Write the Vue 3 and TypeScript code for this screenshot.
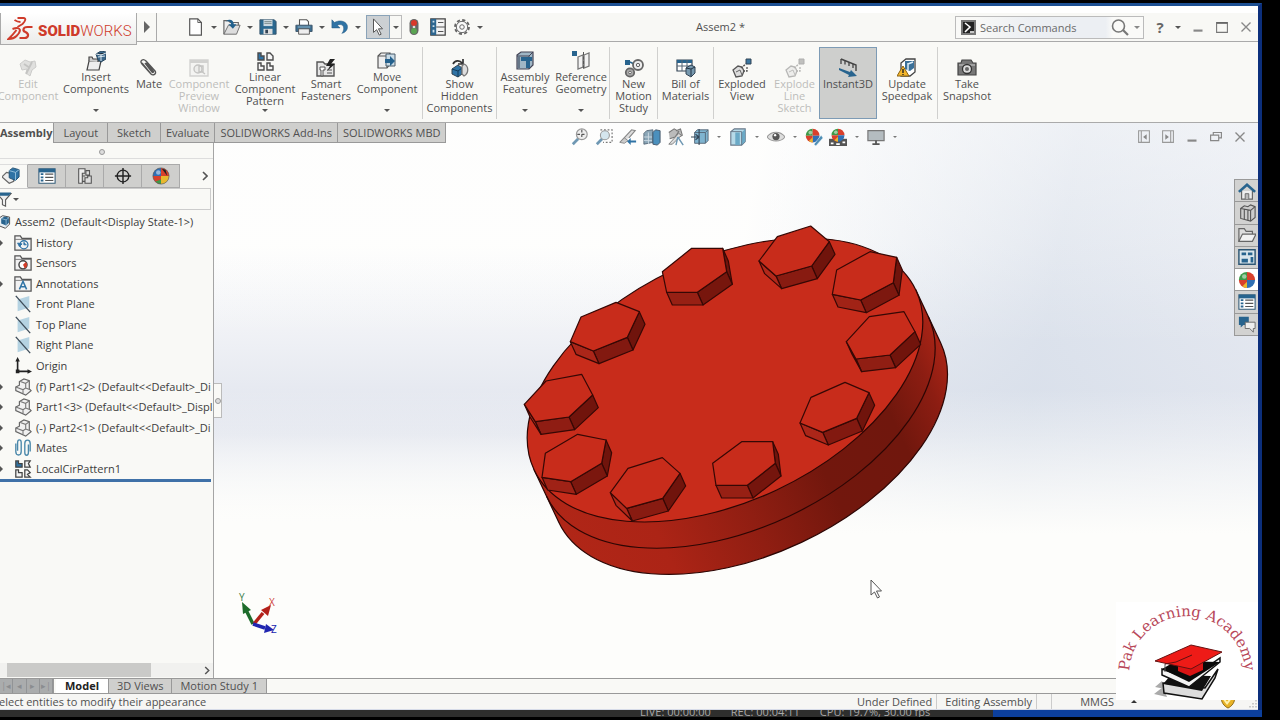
<script setup lang="ts">
type Pt = [number, number]

interface Tool { icon: string; lines: string[]; width: number; menu?: boolean; off?: boolean; active?: boolean }
interface TreeRow { icon: string; text: string; branch?: boolean }

const quick = [
  { icon: 'new', label: 'New' },
  { icon: 'open', label: 'Open' },
  { icon: 'save', label: 'Save' },
  { icon: 'print', label: 'Print' },
  { icon: 'undo', label: 'Undo' },
]

const groups: Tool[][] = [
  [
    { icon: 'edit', lines: ['Edit', 'Component'], width: 56, off: true },
    { icon: 'insert', lines: ['Insert', 'Components'], width: 80, menu: true },
    { icon: 'clip', lines: ['Mate'], width: 26 },
    { icon: 'preview', lines: ['Component', 'Preview', 'Window'], width: 74, off: true },
    { icon: 'linear', lines: ['Linear', 'Component', 'Pattern'], width: 58, menu: true },
    { icon: 'smart', lines: ['Smart', 'Fasteners'], width: 64 },
    { icon: 'move', lines: ['Move', 'Component'], width: 58, menu: true },
  ],
  [{ icon: 'show', lines: ['Show', 'Hidden', 'Components'], width: 73 }],
  [
    { icon: 'feature', lines: ['Assembly', 'Features'], width: 56, menu: true },
    { icon: 'geometry', lines: ['Reference', 'Geometry'], width: 56, menu: true },
  ],
  [{ icon: 'motion', lines: ['New', 'Motion', 'Study'], width: 47 }],
  [{ icon: 'bom', lines: ['Bill of', 'Materials'], width: 55 }],
  [
    { icon: 'explode', lines: ['Exploded', 'View'], width: 56 },
    { icon: 'explode', lines: ['Explode', 'Line', 'Sketch'], width: 49, off: true },
    { icon: 'instant', lines: ['Instant3D'], width: 58, active: true },
    { icon: 'update', lines: ['Update', 'Speedpak'], width: 60 },
  ],
  [{ icon: 'camera', lines: ['Take', 'Snapshot'], width: 58 }],
]

const commandTabs = ['Assembly', 'Layout', 'Sketch', 'Evaluate', 'SOLIDWORKS Add-Ins', 'SOLIDWORKS MBD']
const panelTabs = [
  { icon: 'asmtab', label: 'Feature tree' },
  { icon: 'list', label: 'Properties' },
  { icon: 'config', label: 'Configurations' },
  { icon: 'target', label: 'Dimensions' },
  { icon: 'ball', label: 'Display' },
]

const tree: TreeRow[] = [
  { icon: 'fhistory', text: 'History', branch: true },
  { icon: 'fsensor', text: 'Sensors' },
  { icon: 'fnote', text: 'Annotations', branch: true },
  { icon: 'plane', text: 'Front Plane' },
  { icon: 'plane', text: 'Top Plane' },
  { icon: 'plane', text: 'Right Plane' },
  { icon: 'origin', text: 'Origin' },
  { icon: 'part', text: '(f) Part1<2> (Default<<Default>_Di', branch: true },
  { icon: 'part', text: 'Part1<3> (Default<<Default>_Displ', branch: true },
  { icon: 'part', text: '(-) Part2<1> (Default<<Default>_Di', branch: true },
  { icon: 'mates', text: 'Mates', branch: true },
  { icon: 'pattern', text: 'LocalCirPattern1', branch: true },
]

const viewTools = [
  { icon: 'zoomfit' }, { icon: 'zoomarea' }, { icon: 'prev' }, { icon: 'section' }, { icon: 'dynamic' },
  { icon: 'orient', menu: true }, { icon: 'cube', menu: true }, { icon: 'eye', menu: true },
  { icon: 'appear' }, { icon: 'scene', menu: true }, { icon: 'monitor', menu: true },
]
const docTools = ['dockl', 'dockr', 'min', 'restore', 'close']
const taskTabs = ['home', 'library', 'folder', 'palette', 'tball', 'list', 'chat']

const bottomTabs = ['Model', '3D Views', 'Motion Study 1']

// Bolt heads, in thirds of a pixel from the corner of the part
const depth: Pt = [17, 38]
const heads: Pt[][] = [
  [[545, 100], [638, 100], [650, 170], [562, 232], [470, 232], [457, 170]],
  [[318, 262], [388, 290], [352, 367], [250, 408], [181, 380], [213, 306]],
  [[215, 478], [248, 540], [177, 606], [76, 620], [43, 568], [108, 498]],
  [[203, 658], [288, 675], [275, 745], [182, 800], [96, 787], [106, 715]],
  [[457, 728], [510, 775], [458, 850], [350, 880], [301, 833], [354, 760]],
  [[695, 680], [788, 680], [796, 745], [712, 811], [618, 811], [608, 745]],
  [[902, 33], [958, 80], [905, 153], [798, 183], [747, 138], [802, 65]],
  [[1080, 110], [1160, 127], [1150, 203], [1052, 255], [967, 238], [980, 165]],
  [[1182, 290], [1215, 350], [1140, 420], [1038, 432], [1009, 380], [1078, 305]],
  [[1005, 502], [1077, 533], [1040, 610], [938, 652], [870, 624], [903, 547]],
]

const pts = (p: Pt[]) => p.map((q) => q.join(',')).join(' ')

const bolts = heads.map((top) => {
  const sides: { points: string; fill: string }[] = []
  top.forEach((a, i) => {
    const b = top[(i + 1) % top.length]
    const nx = b[1] - a[1]
    const ny = a[0] - b[0]
    if (nx * depth[0] + ny * depth[1] <= 0) return
    const k = nx / Math.hypot(nx, ny)
    const t = Math.min(1, Math.max(0, (k + 0.5) / 1.2))
    const mix = (u: number, v: number) => Math.round(u + (v - u) * t)
    sides.push({
      points: pts([a, b, [b[0] + depth[0], b[1] + depth[1]], [a[0] + depth[0], a[1] + depth[1]]]),
      fill: `rgb(${mix(178, 112)},${mix(40, 20)},${mix(26, 12)})`,
    })
  })
  return { top: pts(top), sides }
})
</script>

<template>
  <div class="desktop">
    <svg class="defs" aria-hidden="true">
      <defs>
        <linearGradient id="rim" x1="0" x2="1" y1="0" y2="0">
          <stop offset="0" stop-color="#b02617" />
          <stop offset=".2" stop-color="#ac2416" />
          <stop offset=".42" stop-color="#901e12" />
          <stop offset=".62" stop-color="#72170d" />
          <stop offset=".82" stop-color="#70170d" />
          <stop offset=".93" stop-color="#8c1d12" />
          <stop offset="1" stop-color="#a82416" />
        </linearGradient>
      </defs>
      <symbol id="new" viewBox="0 0 20 20"><path d="M3 1h9l4 4v14H3z" fill="#fff" stroke="#555" stroke-width="1.300" /><path d="M12 1v4h4" fill="none" stroke="#555" /></symbol>
      <symbol id="open" viewBox="0 0 20 20"><path d="M1 18V3h5l2 2h9v4" fill="#eee" stroke="#666" stroke-width="1.300" /><path d="M1 18l5-10h13l-4 10z" fill="#ddd" stroke="#666" /><path d="M3 4c4-4 9-2 9 3h3l-4 5-5-5h3c0-3-3-4-6-3z" fill="#22618d" /></symbol>
      <symbol id="save" viewBox="0 0 20 20"><path d="M1 2h16l2 2v14H1z" fill="#2a6890" stroke="#34536a" /><path d="M5 2h10v7H5z" fill="#cbd8e0" /><path d="M6 4h8M6 6h8" stroke="#788" /><path d="M5 12h10v6H5z" fill="#ddd" /><path d="M7 13h3v4H7z" fill="#345" /></symbol>
      <symbol id="print" viewBox="0 0 20 20"><path d="M5 8V2h8l2 2v4" fill="#fff" stroke="#555" stroke-width="1.200" /><path d="M1 8h18v7H1z" fill="#3b6d90" stroke="#3d5568" /><path d="M4 12h12v6H4z" fill="#eee" stroke="#555" /><path d="M3 10h14" stroke="#9bbdd2" /></symbol>
      <symbol id="undo" viewBox="0 0 20 20"><path d="M1 2v9h9l-3-3c4-2 8 0 7 5-.4 2-1 3-2 4 5-1 7-5 6-9C16 3 9 2 4 5z" fill="#2f73a5" stroke="#245a82" stroke-width=".6" /></symbol>
      <symbol id="cursor" viewBox="0 0 20 20"><path d="M5 1v15l3.500-3 3 6 2-1-3-6H15z" fill="#fff" stroke="#555" stroke-width="1.100" /></symbol>
      <symbol id="light" viewBox="0 0 20 20"><rect x="5" y="1" width="10" height="18" rx="5" fill="#666" /><circle cx="10" cy="5.500" r="3.300" fill="#d9382a" /><circle cx="10" cy="10" r="1.500" fill="#ddd" /><circle cx="10" cy="14.500" r="3.300" fill="#5aa552" /></symbol>
      <symbol id="options" viewBox="0 0 20 20"><path d="M2 1h16v18H2z" fill="#f4f4f4" stroke="#444" stroke-width="1.400" /><path d="M2 1h6v18H2z" fill="#2d668f" /><path d="M4 3h2v2H4zM4 8h2v2H4zM4 13h2v3H4z" fill="#cfe0eb" /><path d="M10 5h6M10 15h6M8 10h10" stroke="#555" stroke-width="1.300" /></symbol>
      <symbol id="gear" viewBox="0 0 20 20"><circle cx="10" cy="10" r="7.800" fill="none" stroke="#666" stroke-width="2" stroke-dasharray="3.600 2.520" /><circle cx="10" cy="10" r="6.300" fill="#fafafa" stroke="#666" stroke-width="1.100" /><circle cx="10" cy="10" r="2.500" fill="none" stroke="#666" stroke-width="1.100" /></symbol>
      <symbol id="ds" viewBox="0 0 26 26"><path d="M10 2h6c3 0 2 3-1 6l-5 3M7 4c3 2 4 2 6 2" fill="none" stroke="#cf3b2b" stroke-width="1.900" /><path d="M5 13c9-3 9 2 4 7-2 2-5 3-8 3 3-3 5-5 8-9" fill="none" stroke="#cf3b2b" stroke-width="2" /><path d="M25 11h-5c-5 0-5 4-2 5 4 2 3 6-1 6h-5" fill="none" stroke="#cf3b2b" stroke-width="2.200" /></symbol>

      <symbol id="edit" viewBox="0 0 20 20"><path d="M2 6l5-4 5 2 5-1 1 6-4 3-2 6-4-3 1-4-5 1z" fill="#bbb" stroke="#888" /><path d="M14 4L8 16M6 6l6 4" stroke="#777" stroke-width="1.800" /></symbol>
      <symbol id="insert" viewBox="0 0 20 20"><path d="M1 19l2-9h12l-2 9z" fill="#eee" stroke="#444" stroke-width="1.200" /><path d="M3 10V6h3l1 2h5v3" fill="#ccc" stroke="#444" stroke-width="1.200" /><path d="M10 3l5-3 5 1v7l-5 3-3-2z" fill="#3a678a" stroke="#2a4960" /><path d="M15 3v7M10 3l5 1 5-2M12 6l7-1" stroke="#dce8f0" /></symbol>
      <symbol id="clip" viewBox="0 0 20 20"><path d="M3 5l9 11c2 2 6 0 4-3L7 3C4 0 0 3 3 6l9 10M6 5l7 9c1 1 2 0 1-1L7 5" fill="none" stroke="#555" stroke-width="1.400" /></symbol>
      <symbol id="preview" viewBox="0 0 20 20"><path d="M1 2h18v16H1z" fill="#eee" stroke="#999" stroke-width="1.400" /><path d="M1 2h18v3H1z" fill="#999" /><circle cx="9" cy="11" r="4" fill="#ddd" stroke="#777" stroke-width="1.400" /><path d="M10 8h4v6h-4zM12 13l4 3" fill="none" stroke="#777" stroke-width="1.400" /></symbol>
      <symbol id="linear" viewBox="0 0 20 20"><g fill="#f5f5f5" stroke="#4b4b4b" stroke-width="1.400"><path d="M3 2h3v3h3v4H3z" fill="#2f73a5" /><path d="M12 2h3l3 3v4h-6z" /><path d="M3 12h3v3h3v4H3z" /><path d="M12 12h3v3h3v4h-6z" /></g></symbol>
      <symbol id="smart" viewBox="0 0 20 20"><path d="M1 18V4h6l2 2h9v12z" fill="#e6e6e6" stroke="#555" stroke-width="1.400" /><path d="M4 9h5v3H7v6H5v-6H4zM11 12h5M11 15h5" fill="#fff" stroke="#555" /><path d="M19 1h-5l-4 7h4l-3 5 8-7h-4z" fill="#222" /></symbol>
      <symbol id="move" viewBox="0 0 20 20"><path d="M1 5l3-3h9v11l-3 4H1z" fill="#eee" stroke="#555" stroke-width="1.200" /><path d="M1 5h9v12M10 5l3-3" fill="none" stroke="#555" /><path d="M9 3h9v12H9z" fill="#c9dbe6" stroke="#4b5d6a" /><path d="M8 8h5V5l5 5-5 5v-3H8z" fill="#24618d" /></symbol>
      <symbol id="show" viewBox="0 0 20 20"><path d="M2 11l6-4 4 3v6l-4 3-6-3z" fill="#2f73a5" stroke="#31424f" /><path d="M2 11l6 2v6M8 13l4-3" stroke="#123c5b" fill="none" /><path d="M3 6c2-4 7-4 9-1M13 1v5H8" fill="none" stroke="#333" stroke-width="1.700" /><path d="M14 6c5 2 5 9 0 12l-2-2V8z" fill="#ddd" stroke="#777" stroke-width="1.300" /></symbol>
      <symbol id="feature" viewBox="0 0 20 20"><path d="M2 4l4-3h12v13l-4 4H2z" fill="#9fb6c5" stroke="#445" stroke-width="1.200" /><path d="M2 5h12v13M14 5l4-4" fill="none" stroke="#445" /><path d="M6 6h11v4h-2v7h-4v-7H6z" fill="#28648e" /><path d="M4 5v12" stroke="#678" stroke-width="2" /></symbol>
      <symbol id="geometry" viewBox="0 0 20 20"><path d="M1 0h5v5H1z" fill="#28648e" /><path d="M7 6l5-2v12l-5 2zM13 4l5-2v13l-5 2z" fill="#f2f2f2" stroke="#777" stroke-width="1.300" /><path d="M12.500 1v18" stroke="#555" stroke-dasharray="3 1.500" /></symbol>
      <symbol id="motion" viewBox="0 0 20 20"><path d="M1 2h5v5H1z" fill="#28648e" /><path d="M6 4l4 2" stroke="#28648e" stroke-width="1.500" /><circle cx="14" cy="7" r="5" fill="#eee" stroke="#666" stroke-width="1.800" /><circle cx="14" cy="7" r="1.700" fill="none" stroke="#666" /><circle cx="6" cy="14.500" r="4.200" fill="#aaa" stroke="#666" stroke-width="1.800" /><circle cx="6" cy="14.500" r="1.300" fill="#fff" stroke="#666" /></symbol>
      <symbol id="bom" viewBox="0 0 20 20"><path d="M1 2h15v11H1z" fill="#fff" stroke="#345" stroke-width="1.200" /><path d="M1 2h15v3H1z" fill="#28648e" /><path d="M1 8h15M6 2v11M11 2v11" stroke="#567" /><path d="M10 10l5-3 4 2v6l-4 4-5-3z" fill="#7698ae" stroke="#345" /><path d="M15 11l4-2M15 11v7M10 10l5 1" stroke="#234" /></symbol>
      <symbol id="explode" viewBox="0 0 20 20"><path d="M1 12l5-4 4 1 2 4-2 5-6 1z" fill="#ddd" stroke="#555" stroke-width="1.300" /><path d="M4 14l4-2 2 5" fill="none" stroke="#666" /><path d="M9 10l5-4M15 9v4h-4" fill="none" stroke="#555" stroke-dasharray="2 1" stroke-width="1.300" /><path d="M14 1h5v5h-5z" fill="#3b76a0" stroke="#345" /></symbol>
      <symbol id="instant" viewBox="0 0 20 20"><path d="M3 1l15 6v6" fill="none" stroke="#444" stroke-width="1.400" /><path d="M3 1v5M7 2.500v4M11 4v4M15 6v4" stroke="#444" stroke-width="1.300" /><path d="M1 10l11 4 1-2 6 6-9 1 1-2L1 12z" fill="#28648e" /></symbol>
      <symbol id="update" viewBox="0 0 20 20"><path d="M4 5l5-4h9v13l-5 4H4z" fill="#fff" stroke="#444" stroke-width="1.300" /><path d="M8 3h9v7l-4 3-5-2z" fill="#3a7099" /><path d="M11 5v7M11 6l5-2" stroke="#dcecf7" stroke-width="1.500" /><path d="M6 8l6 10H0z" fill="#f4b62a" stroke="#8c6414" /><path d="M6 11v4M6 16v1" stroke="#222" stroke-width="1.400" /></symbol>
      <symbol id="camera" viewBox="0 0 20 20"><path d="M1 5h3l1-3h9l2 3h3v12H1z" fill="#777" stroke="#444" stroke-width="1.200" /><path d="M2 7h16" stroke="#ccc" /><circle cx="10" cy="11" r="4.500" fill="#ddd" stroke="#333" stroke-width="1.300" /><circle cx="10" cy="11" r="2" fill="#666" /></symbol>

      <symbol id="asmtab" viewBox="0 0 20 20"><path d="M0 11l5-5 4 1v4h4v5l-5 2z" fill="#eee" stroke="#666" stroke-width="1.300" /><path d="M8 4l4-3 7 2v8l-4 4-7-3z" fill="#2f73a5" stroke="#234f70" /><path d="M8 4l7 2v9M15 6l4-3" fill="none" stroke="#9cc4de" /></symbol>
      <symbol id="list" viewBox="0 0 20 20"><path d="M1 2h18v16H1z" fill="#fff" stroke="#345d7a" stroke-width="1.200" /><path d="M1 2h18v4H1z" fill="#28648e" /><path d="M3 8h3M3 11.500h3M3 15h3" stroke="#28648e" stroke-width="2" /><path d="M8 8h9M8 11.500h9M8 15h9" stroke="#555" stroke-width="1.300" /></symbol>
      <symbol id="config" viewBox="0 0 20 20"><path d="M3 2h7v5H7v11H3zM7 10h3M7 16h3" fill="#eee" stroke="#555" stroke-width="1.200" /><path d="M11 4h4v5h-4zM10 12h3v-2h4v8h-7z" fill="#ddd" stroke="#555" stroke-width="1.200" /></symbol>
      <symbol id="target" viewBox="0 0 20 20"><circle cx="10" cy="10" r="6.500" fill="none" stroke="#222" stroke-width="1.500" /><path d="M10 1v18M1 10h18" stroke="#222" stroke-width="1.600" /></symbol>
      <symbol id="ball" viewBox="0 0 20 20"><path d="M10 10V1A9 9 0 0 0 1 10z" fill="#2f6fb4" /><path d="M10 10V1a9 9 0 0 1 9 9z" fill="#d8402c" /><path d="M11 2l6 8-2-7z" fill="#222" /><path d="M10 10h9a9 9 0 0 1-9 9z" fill="#e8b82e" /><path d="M10 10v9a9 9 0 0 1-9-9z" fill="#d8402c" /><path d="M10 14v5a9 9 0 0 1-6-3z" fill="#3d9a48" /><circle cx="7" cy="6" r="2.500" fill="#fff" opacity=".5" /><circle cx="10" cy="10" r="9" fill="none" stroke="#555" stroke-width=".7" /></symbol>
      <symbol id="tball" viewBox="0 0 20 20"><path d="M10 10V1A9 9 0 0 0 1 10z" fill="#3d9a48" /><path d="M10 10V1a9 9 0 0 1 9 9z" fill="#d8402c" /><path d="M10 10h9a9 9 0 0 1-9 9z" fill="#2f6fb4" /><path d="M10 10v9a9 9 0 0 1-9-9z" fill="#d8402c" /><path d="M10 12v7a9 9 0 0 1-5-2z" fill="#e8b82e" /><circle cx="7" cy="6" r="2.500" fill="#fff" opacity=".5" /></symbol>
      <symbol id="funnel" viewBox="0 0 20 20"><path d="M1 3h18l-7 8v8l-4-2v-6z" fill="#eee" stroke="#555" stroke-width="1.300" /><path d="M1 2h18l-3 4H4z" fill="#28648e" /></symbol>
      <symbol id="asm" viewBox="0 0 20 20"><path d="M2 5l6-4 10 2v10l-6 6-10-4z" fill="#e8eef2" stroke="#444" stroke-width="1.300" /><path d="M6 5l5-3 6 2v7l-4 4-7-3z" fill="#28648e" /><path d="M6 5l7 2v8M13 7l4-3" fill="none" stroke="#a8cce2" /></symbol>
      <symbol id="fhistory" viewBox="0 0 20 20"><path d="M1 18V2h6l2 3h10v13z" fill="#f2f2f2" stroke="#555" stroke-width="1.400" /><path d="M1 6h18" stroke="#777" /><circle cx="11" cy="12" r="4.500" fill="none" stroke="#2f73a5" stroke-width="1.400" /><path d="M11 9v3h3M4 10l2 4 3-3z" fill="#2f73a5" stroke="#2f73a5" /></symbol>
      <symbol id="fsensor" viewBox="0 0 20 20"><path d="M1 18V2h6l2 3h10v13z" fill="#f2f2f2" stroke="#555" stroke-width="1.400" /><path d="M1 6h18" stroke="#777" /><circle cx="10" cy="12" r="4.500" fill="#fff" stroke="#444" stroke-width="1.600" /><path d="M10 12l3-3a4 4 0 0 1-1 7z" fill="#d23c28" /></symbol>
      <symbol id="fnote" viewBox="0 0 20 20"><path d="M1 18V2h6l2 3h10v13z" fill="#f2f2f2" stroke="#555" stroke-width="1.400" /><path d="M1 6h18" stroke="#777" /><path d="M6 16l4-9 4 9M8 13h5" fill="none" stroke="#2f73a5" stroke-width="1.700" /></symbol>
      <symbol id="plane" viewBox="0 0 20 20"><path d="M4 5l13-4v13L4 18z" fill="#b5d3e2" /><path d="M2 1l16 18" stroke="#3d4c58" stroke-width="1.500" /></symbol>
      <symbol id="origin" viewBox="0 0 20 20"><path d="M4 3v13h13" fill="none" stroke="#222" stroke-width="1.800" /><path d="M4 0l2.500 5h-5zM20 16l-5 2.500v-5zM2 14h4v4H2z" fill="#222" /></symbol>
      <symbol id="part" viewBox="0 0 20 20"><path d="M2 10l4-2V4l5-3 6 2v9l2 2-6 5-11-5z" fill="#f0f0f0" stroke="#666" stroke-width="1.300" /><path d="M2 10l8 3v4M10 13l3-2V6L7 4M13 6l4-3M13 11l5 2" fill="none" stroke="#777" stroke-width="1.200" /></symbol>
      <symbol id="mates" viewBox="0 0 20 20"><path d="M2 5v9c0 5 6 5 6 0V4c0-4-4-4-4 0v9M18 14V5c0-5-6-5-6 0v10c0 4 4 4 4 0V6" fill="none" stroke="#4b88ab" stroke-width="1.500" /></symbol>
      <symbol id="pattern" viewBox="0 0 20 20"><g fill="#f5f5f5" stroke="#444" stroke-width="1.400"><path d="M2 1h3v3h4v4H2z" fill="#2f73a5" /><path d="M12 1h6l-2 3 2 4h-6V5zM2 11h3v3h4v5H2zM12 11h3l3 3-3 2 3 3h-6z" /></g></symbol>

      <symbol id="zoomfit" viewBox="0 0 20 20"><path d="M2 18l6-6" stroke="#6f98b3" stroke-width="3" /><circle cx="12" cy="7" r="6" fill="#eee" stroke="#999" stroke-width="1.300" /><path d="M12 2v10M7 7h10" stroke="#555" stroke-width="1.300" stroke-dasharray="3 2" /></symbol>
      <symbol id="zoomarea" viewBox="0 0 20 20"><path d="M6 2h13v14H9" fill="none" stroke="#777" stroke-dasharray="2 2" stroke-width="1.300" /><path d="M2 18l6-6" stroke="#6f98b3" stroke-width="3" /><circle cx="11" cy="8" r="5" fill="#d5e6ee" stroke="#999" stroke-width="1.200" /></symbol>
      <symbol id="prev" viewBox="0 0 20 20"><path d="M1 16L14 2l4 1-7 8" fill="#ddd" stroke="#888" stroke-width="1.300" /><path d="M1 16l5-5 4 3-4 3z" fill="#ccc" stroke="#888" /><path d="M19 14h-6v-3l-4 4 4 4v-3h6z" fill="#2f73a5" /></symbol>
      <symbol id="section" viewBox="0 0 20 20"><path d="M1 6l3-3 7-1v14l-10 2z" fill="#8aa6b7" stroke="#567" /><path d="M11 5l3-3 5 1v13l-3 3-5-1z" fill="#4b90bd" stroke="#456" /><path d="M1 10h9M1 14h9M6 5v13" stroke="#cfdde5" /></symbol>
      <symbol id="dynamic" viewBox="0 0 20 20"><path d="M2 5l6-4 5 3-4 6-6 2M10 3l5-2 2 7-5 3" fill="#bbb" stroke="#777" stroke-width="1.200" /><path d="M2 18L13 6l3 2L6 18z" fill="#ddd" stroke="#777" /><path d="M12 10l6 9M12 10l-2 9" stroke="#6f98b3" stroke-width="1.600" /></symbol>
      <symbol id="orient" viewBox="0 0 20 20"><path d="M4 5l3-3h12v12l-3 3H4z" fill="#7fb4d0" stroke="#567" /><path d="M4 5h12v12M16 5l3-3" fill="none" stroke="#567" /><path d="M0 10h8M5 7l4 3-4 3M9 1v18" stroke="#345" stroke-width="1.200" fill="none" /></symbol>
      <symbol id="cube" viewBox="0 0 20 20"><path d="M2 4l4-3h12v14l-4 4H2z" fill="#b7dae8" stroke="#678" stroke-width="1.200" /><path d="M7 5h5v14H7zM14 5l4-4v14l-4 4z" fill="#6ba9c6" /><path d="M2 4h12v15" fill="none" stroke="#678" /></symbol>
      <symbol id="eye" viewBox="0 0 20 20"><path d="M0 10c5-7 15-7 20 0-5 6-15 6-20 0z" fill="#ddd" stroke="#999" stroke-width="1.200" /><circle cx="10" cy="9.500" r="4" fill="#555" /><circle cx="9" cy="8" r="1.300" fill="#fff" /></symbol>
      <symbol id="appear" viewBox="0 0 20 20"><use href="#tball" width="17" height="17" /><path d="M18 8l2 3-8 9-2-2z" fill="#4f8fb6" stroke="#fff" stroke-width=".5" /></symbol>
      <symbol id="scene" viewBox="0 0 20 20"><path d="M0 12h20v8H0z" fill="#555" /><path d="M2 16h3v2H2zM8 17h4v2H8zM15 15h3v2h-3z" fill="#fff" /><use href="#tball" x="2" y="0" width="16" height="16" /></symbol>
      <symbol id="monitor" viewBox="0 0 20 20"><path d="M1 3h18v11H1z" fill="#b4bcc0" stroke="#777" stroke-width="1.300" /><path d="M10 14v3M6 18h8" stroke="#555" stroke-width="2" /></symbol>
      <symbol id="dockl" viewBox="0 0 20 20"><path d="M4 3h12v13H4zM7 3v13" fill="none" stroke="#999" stroke-width="1.200" /><path d="M13 7v6l-4-3z" fill="#888" /></symbol>
      <symbol id="dockr" viewBox="0 0 20 20"><path d="M4 3h12v13H4zM13 3v13" fill="none" stroke="#999" stroke-width="1.200" /><path d="M7 7v6l4-3z" fill="#888" /></symbol>
      <symbol id="min" viewBox="0 0 20 20"><path d="M5 14h10" stroke="#888" stroke-width="2.400" /></symbol>
      <symbol id="restore" viewBox="0 0 20 20"><path d="M7 8V5h9v6h-3M4 8h9v6H4z" fill="none" stroke="#888" stroke-width="1.300" /></symbol>
      <symbol id="close" viewBox="0 0 20 20"><path d="M5 5l10 10M15 5L5 15" stroke="#888" stroke-width="1.500" /></symbol>
      <symbol id="max" viewBox="0 0 20 20"><path d="M4 5h12v11H4z" fill="none" stroke="#777" stroke-width="1.200" /><path d="M4 5.500h12" stroke="#666" stroke-width="2" /></symbol>

      <symbol id="home" viewBox="0 0 20 20"><path d="M4 10v9h12v-9" fill="#eee" stroke="#666" stroke-width="1.300" /><path d="M8 19v-6h4v6" fill="#bbb" stroke="#666" /><path d="M0 10l10-9 10 9-2 2-8-7-8 7z" fill="#28648e" /></symbol>
      <symbol id="library" viewBox="0 0 20 20"><path d="M3 5l4-3 4 1 3-2 5 2v12l-5 4-11-3z" fill="#ccc" stroke="#555" stroke-width="1.200" /><path d="M7 6v11M11 7v11M14 7v12M3 5l11 2 5-4" fill="none" stroke="#555" stroke-width="1.200" /></symbol>
      <symbol id="folder" viewBox="0 0 20 20"><path d="M1 17V3h6l2 3h7v3" fill="#ddd" stroke="#666" stroke-width="1.300" /><path d="M1 17l4-8h15l-4 8z" fill="#f2f2f2" stroke="#666" stroke-width="1.300" /></symbol>
      <symbol id="palette" viewBox="0 0 20 20"><path d="M1 2h18v16H1z" fill="#dbe6ec" stroke="#2d5674" stroke-width="1.600" /><path d="M4 5h5v3H4zM11 5h5v3h-5zM4 12h7v4H4zM14 10h3v6h-3z" fill="#28648e" /></symbol>
      <symbol id="chat" viewBox="0 0 20 20"><path d="M1 2h11v9H6l-3 3v-3H1z" fill="#28648e" /><path d="M8 8h11v7h-2v4l-4-4H8z" fill="#eee" stroke="#666" /></symbol>
    </svg>

    <main class="window">
      <header class="title">
        <div class="brand">
          <svg class="ds"><use href="#ds" /></svg>
          <span class="word"><b>SOLID</b>WORKS</span>
        </div>
        <button class="expand" aria-label="Show menu"><i></i></button>
        <nav class="quick">
          <template v-for="q in quick" :key="q.icon">
            <button class="qbtn" :aria-label="q.label"><svg class="ic"><use :href="'#' + q.icon" /></svg></button>
            <button class="caret" :aria-label="q.label + ' options'"><i></i></button>
          </template>
          <button class="qbtn picked" aria-label="Select"><svg class="ic"><use href="#cursor" /></svg></button>
          <button class="caret boxed" aria-label="Select options"><i></i></button>
          <button class="qbtn" aria-label="Rebuild"><svg class="ic"><use href="#light" /></svg></button>
          <button class="qbtn" aria-label="File properties"><svg class="ic"><use href="#options" /></svg></button>
          <button class="qbtn" aria-label="Settings"><svg class="ic"><use href="#gear" /></svg></button>
          <button class="caret" aria-label="Settings options"><i></i></button>
        </nav>
        <h1>Assem2 *</h1>
        <div class="search">
          <svg class="prompt" viewBox="0 0 15 15"><path d="M0 0h15v15H0z" fill="#777" /><path d="M2 2h11v11H2z" fill="#222" /><path d="M4 3l5 4-5 5M9 12h4" fill="none" stroke="#fff" stroke-width="1.600" /></svg>
          <input type="text" placeholder="Search Commands" aria-label="Search Commands" />
          <button class="find" aria-label="Search">
            <svg viewBox="0 0 18 18"><circle cx="7.500" cy="7" r="6" fill="none" stroke="#777" stroke-width="1.600" /><path d="M12 11l5 5" stroke="#777" stroke-width="2.200" /></svg>
          </button>
          <button class="caret" aria-label="Search options"><i></i></button>
        </div>
        <div class="wintools">
          <button class="help">?</button>
          <button class="caret" aria-label="Help options"><i></i></button>
          <button class="wb" aria-label="Minimize"><svg class="ic"><use href="#min" /></svg></button>
          <button class="wb" aria-label="Maximize"><svg class="ic"><use href="#max" /></svg></button>
          <button class="wb" aria-label="Close"><svg class="ic"><use href="#close" /></svg></button>
        </div>
      </header>

      <section class="ribbon">
        <div v-for="(g, gi) in groups" :key="gi" class="group">
          <button
            v-for="t in g"
            :key="t.lines.join(' ')"
            class="tool"
            :class="{ menu: t.menu, off: t.off, active: t.active }"
            :style="{ width: t.width + 'px' }"
          >
            <svg class="ric"><use :href="'#' + t.icon" /></svg>
            <span v-for="l in t.lines" :key="l">{{ l }}</span>
            <i v-if="t.menu"></i>
          </button>
        </div>
      </section>

      <section class="work">
        <nav class="cmdtabs">
          <button v-for="(t, i) in commandTabs" :key="t" :class="{ on: i === 0, long: i > 2 }">{{ t }}</button>
        </nav>

        <aside class="panel">
          <div class="grip"><i></i></div>
          <div class="ptabs">
            <button v-for="(p, i) in panelTabs" :key="p.icon" :class="{ on: i === 0 }" :aria-label="p.label">
              <svg class="ic"><use :href="'#' + p.icon" /></svg>
            </button>
            <button class="more" aria-label="More tabs"><svg viewBox="0 0 6 10"><path d="M1 1l4 4-4 4" fill="none" stroke="#555" stroke-width="1.600" /></svg></button>
          </div>
          <button class="filter" aria-label="Filter"><svg class="ic"><use href="#funnel" /></svg><i></i></button>
          <ul class="tree">
            <li class="root"><svg class="tic"><use href="#asm" /></svg>Assem2&nbsp; (Default&lt;Display State-1&gt;)</li>
            <li v-for="r in tree" :key="r.text">
              <b :class="{ branch: r.branch }"></b>
              <svg class="tic"><use :href="'#' + r.icon" /></svg><span>{{ r.text }}</span>
            </li>
          </ul>
          <div class="rollback"></div>
          <div class="hscroll">
            <div class="thumb"></div>
            <svg viewBox="0 0 6 10"><path d="M1 1l4 4-4 4" fill="none" stroke="#555" stroke-width="1.600" /></svg>
          </div>
        </aside>

        <div class="canvas">
          <svg class="scene" viewBox="214 123 1044 555" preserveAspectRatio="xMidYMid meet" role="img" aria-label="Flange assembly with bolts">
            <g transform="translate(725 380) rotate(-25.200)" stroke="#2c0604" stroke-width="1.200">
              <path d="M-211 0L-211 58A211 121.500 0 0 0 211 58L211 0z" fill="url(#rim)" />
              <path d="M-211 29A211 121.500 0 0 0 211 29" fill="none" />
              <ellipse rx="211" ry="121.500" fill="#c82c1b" />
            </g>
            <g transform="translate(510 215) scale(.33333)" stroke="#360805" stroke-width="3.600" stroke-linejoin="round">
              <g v-for="(b, i) in bolts" :key="i">
                <polygon v-for="s in b.sides" :key="s.points" :points="s.points" :fill="s.fill" />
                <polygon :points="b.top" fill="#c82c1b" />
              </g>
            </g>
            <g stroke-width="3.500">
              <path d="M253 624l-7-14" stroke="#1d6b2b" /><path d="M242 602l9 8-8 4z" fill="#1d6b2b" />
              <path d="M254 624l9-11" stroke="#b3201a" /><path d="M271 605l-3 11-7-6z" fill="#b3201a" />
              <path d="M253 624l12 4" stroke="#2026b0" /><path d="M274 630l-10 3 2-9z" fill="#2026b0" />
            </g>
            <g class="axes"><text x="239" y="601" fill="#3b7f4c">Y</text><text x="269" y="606" fill="#d0463e">X</text><text x="271" y="633" fill="#2026b0">Z</text></g>
            <path d="M871 580v15l3.500-3 3 6 2-1-3-6h5z" fill="#fff" stroke="#555" />
          </svg>

          <nav class="viewbar">
            <template v-for="v in viewTools" :key="v.icon">
              <button class="qbtn" :aria-label="v.icon"><svg class="ic"><use :href="'#' + v.icon" /></svg></button>
              <button v-if="v.menu" class="caret" :aria-label="v.icon + ' options'"><i></i></button>
            </template>
          </nav>
          <nav class="docbar">
            <button v-for="d in docTools" :key="d" class="qbtn" :aria-label="d"><svg class="ic"><use :href="'#' + d" /></svg></button>
          </nav>
          <nav class="taskpane">
            <button v-for="t in taskTabs" :key="t" :class="{ on: t === 'tball' }" :aria-label="t"><svg class="ic"><use :href="'#' + t" /></svg></button>
          </nav>
          <button class="splitter" aria-label="Collapse panel"><i></i></button>
        </div>
      </section>

      <nav class="views">
        <div class="steps">
          <button v-for="s in ['|◂', '◂', '▸', '▸|']" :key="s">{{ s }}</button>
        </div>
        <button v-for="(b, i) in bottomTabs" :key="b" class="vtab" :class="{ on: i === 0 }">{{ b }}</button>
      </nav>

      <footer class="status">
        <span class="hint">elect entities to modify their appearance</span>
        <span class="cell">Under Defined</span>
        <span class="cell">Editing Assembly</span>
        <span class="units">MMGS</span>
        <i class="up"></i>
        <svg class="shield" viewBox="0 0 16 16"><path d="M1 2h14c1 7-3 11-7 13C4 13 0 9 1 2z" fill="#e8b327" stroke="#8a6616" /><path d="M4 6l3 4 6-8" fill="none" stroke="#fff3b0" stroke-width="2" /></svg>
        <svg class="sizer" viewBox="0 0 10 10"><path d="M8 1v8M5 4v5M2 7v2" stroke="#bbb" stroke-width="1.500" stroke-dasharray="1.500 1.500" /></svg>
      </footer>

      <svg class="academy" viewBox="1116 601 142 98">
        <path d="M1116 601h142v98h-142z" fill="#fff" />
        <path id="arc" d="M1130 684A58 58 0 1 1 1244 684" fill="none" />
        <text><textPath href="#arc" startOffset="50%" text-anchor="middle">Pak Learning Academy</textPath></text>
        <path d="M1154 693l9-7 4 10zM1155 686l7-6 3 8z" fill="#aaa" />
        <path d="M1163 682l42 5 13-19-3 9-13 21-38-6z" fill="#ddd" stroke="#111" stroke-width="1.500" />
        <path d="M1163 683l8-9 40 1-9 15z" fill="#111" />
        <path d="M1162 674l27 12 31-25v-4l-30 21-28-10z" fill="#f4f4f4" stroke="#111" stroke-width="1.500" />
        <path d="M1162 668l14-8 44 1-31 20z" fill="#0a0a0a" />
        <path d="M1178 662v8l12 5 13-6v-7z" fill="#d91414" />
        <path d="M1165 663v8" stroke="#555" />
        <path d="M1155 660l36-16 31 7-31 17z" fill="#ee1b17" stroke="#611" stroke-width="1" />
        <path d="M1192 654l-16 7-11 2" fill="none" stroke="#5d1010" />
      </svg>
    </main>

    <div class="recorder">
      <span>LIVE: 00:00:00</span><span>REC: 00:04:11</span><span>CPU: 19.7%, 30.00 fps</span>
    </div>
  </div>
</template>

<style>
html, body { margin: 0; background: #000; }
</style>

<style scoped>
.desktop {
  box-sizing: border-box;
  height: 100vh;
  padding: 3px 18px 3px 0;
  display: flex;
  flex-direction: column;
  overflow: hidden;
  background: #000;
  color: #505050;
  font: 11px/12px "Open Sans", "Noto Sans", sans-serif;
}
.defs { position: absolute; width: 0; height: 0; }
button {
  box-sizing: border-box;
  margin: 0;
  padding: 0;
  border: 0;
  background: none;
  color: inherit;
  font: inherit;
  display: flex;
  align-items: center;
  justify-content: center;
}
.ic { width: 18px; height: 18px; display: block; }
i { display: block; }
.caret { width: 12px; }
.caret i, .tool i, .filter i {
  border: 3px solid transparent;
  border-top-color: #555;
  border-bottom-width: 0;
}
.window {
  position: relative;
  flex: 1;
  min-height: 0;
  display: flex;
  flex-direction: column;
  border-top: 3px solid #1c4f92;
  border-right: 4px solid #0c2f7c;
  background: #f9f9f6;
}
.title {
  flex: none;
  height: 28px;
  padding-top: 7px;
  display: flex;
  align-items: stretch;
  border-bottom: 1px solid #aaa;
  background: linear-gradient(#fff 7px, #f8f8f5 7px);
}
.brand {
  position: relative;
  z-index: 2;
  box-sizing: border-box;
  width: 137px;
  height: 32px;
  padding-left: 6px;
  display: flex;
  align-items: center;
  gap: 4px;
  border: 1px solid #aaa;
  border-top: 0;
  background: linear-gradient(#fff, #ececea);
  color: #cf3b2b;
}
.ds { width: 27px; height: 26px; }
.word { padding-top: 4px; font: 15px/18px Roboto, "Open Sans", sans-serif; font-weight: 300; }
.word b { font-weight: 900; }
.expand { width: 20px; border-right: 1px solid #aaa; }
.expand i { border: 6px solid transparent; border-left-color: #666; border-right-width: 0; }
.quick { display: flex; padding: 2px 0; margin-left: 27px; }
.qbtn { width: 24px; }
.picked { margin-left: 2px; border: 1px solid #8aa3b8; background: #ccd0d3; }
.boxed { border: 1px solid #bbb; border-left: 0; }
h1 { flex: 1; margin: 0; text-align: center; font: inherit; line-height: 28px; }
.search {
  box-sizing: border-box;
  width: 189px;
  height: 23px;
  margin: 3px 0 0;
  padding-left: 5px;
  display: flex;
  align-items: center;
  border: 1px solid #bbb;
  background: linear-gradient(90deg, #f9f9f7 10%, #eceff3 40%, #eceff3 80%, #fafaf8 84%);
}
.prompt { flex: none; width: 15px; height: 15px; }
.search input {
  flex: 1;
  min-width: 0;
  padding: 0 0 0 4px;
  border: 0;
  outline: 0;
  background: none;
  font: inherit;
}
.search input::placeholder { color: #6a6a6a; opacity: 1; }
.find { width: 22px; }
.find svg { width: 18px; height: 18px; }
.search .caret i { border-top-color: #888; }
.wintools { display: flex; margin-left: 6px; }
.help { width: 20px; font-weight: 700; font-size: 15px; color: #666; }
.help + .caret { width: 16px; }
.wb { width: 24px; }
.ribbon {
  flex: none;
  height: 80px;
  display: flex;
  border-bottom: 1px solid #aaa;
  background: #f9f9f6;
}
.group { display: flex; padding: 5px 0 3px; position: relative; }
.group:first-child { padding-right: 6px; }
.group + .group::before { content: ""; width: 1px; background: #d0d0ce; }
.tool {
  position: relative;
  flex-direction: column;
  justify-content: flex-start;
  padding-top: 11px;
  white-space: nowrap;
}
.tool.menu { padding-top: 4px; }
.tool i { position: absolute; bottom: 7px; }
.tool span { display: block; }
.ric { width: 20px; height: 20px; flex: none; }
.tool.off { color: #bdbdbb; }
.tool.off .ric { opacity: .4; filter: grayscale(1); }
.tool.active { border: 1px solid #7d9bb5; background: #cecfcd; padding-top: 10px; }
.work { position: relative; flex: 1; min-height: 0; display: flex; }
.cmdtabs { position: absolute; z-index: 2; left: 0; top: 0; display: flex; }
.cmdtabs button {
  height: 20px;
  padding: 0 9px;
  border: 1px solid #999;
  border-width: 0 1px 1px 0;
  background: #cfcfcd;
  white-space: nowrap;
}
.cmdtabs .long { padding: 0 5px; }
.cmdtabs .on { padding: 0 1px 0 0; font-weight: 700; border-bottom: 0; background: #f9f9f6; }
.panel {
  box-sizing: border-box;
  flex: none;
  width: 214px;
  padding-top: 20px;
  display: flex;
  flex-direction: column;
  border-right: 1px solid #a5a5a5;
  background: #f9f9f6;
}
.grip { height: 16px; padding-top: 2px; box-sizing: border-box; display: flex; align-items: center; justify-content: center; padding-right: 10px; border-bottom: 1px solid #ddd; }
.grip i, .splitter i { width: 4px; height: 4px; border: 1px solid #999; border-radius: 50%; background: #ddd; }
.ptabs { display: flex; height: 24px; margin-top: 5px; }
.ptabs button { width: 38px; border: 1px solid #aaa; border-left: 0; background: #cfcfcd; }
.ptabs .on { width: 28px; padding-right: 6px; border-color: #ddd #aaa transparent; background: #f9f9f6; }
.ptabs .more { flex: 1; padding-left: 16px; border: 0; background: none; }
.more svg { width: 6px; height: 10px; }
.filter { flex: none; justify-content: flex-start; height: 22px; margin-right: 2px; border: 1px solid #ccc; border-left: 0; }
.filter .ic { width: 16px; height: 16px; margin-left: -4px; }
.filter i { margin-left: 1px; }
.tree { flex: none; height: 267px; margin: 2px 0 0; padding: 0; display: flex; flex-direction: column; list-style: none; color: #3c3c3c; overflow: hidden; }
.tree li { flex: 1; display: flex; align-items: center; white-space: pre; }
.tic { flex: none; width: 18px; height: 18px; margin-right: 4px; }
.root .tic { width: 14px; margin: 0 4px 0 -3px; }
.tree b { flex: none; width: 14px; height: 6px; }
.tree b.branch { width: 11px; height: 0; margin-right: 3px; border: 3px solid transparent; border-left-color: #555; box-sizing: border-box; border-right-width: 0; }
.rollback { flex: none; height: 3px; margin-right: 2px; background: #4071a8; }
.hscroll { height: 14px; margin: auto 0 1px; padding: 0 3px 0 7px; display: flex; justify-content: space-between; align-items: center; background: #f1f1ef; }
.thumb { width: 71%; height: 14px; background: #cacac8; }
.hscroll svg { width: 6px; height: 9px; }
.canvas {
  position: relative;
  flex: 1;
  min-width: 0;
  background:
    linear-gradient(180deg, rgba(253, 253, 252, 0) 48%, #fdfdfb 74%),
    linear-gradient(100deg, rgba(220, 226, 236, 0) 48%, rgba(216, 223, 234, .85) 76%, rgba(226, 230, 239, .8) 100%),
    linear-gradient(180deg, #fefefd 22%, #dfe3ed 56%, #fdfdfc 72%);
}
.canvas::before {
  content: "";
  position: absolute;
  inset: 0;
  background: linear-gradient(180deg, rgba(253, 253, 253, .5), rgba(253, 253, 253, 0) 40%);
}
.scene { position: absolute; inset: 0; width: 100%; height: 100%; }
.axes text { font: 10px "Open Sans", sans-serif; }
.viewbar { position: absolute; top: 2px; left: 0; right: 2px; display: flex; justify-content: center; height: 24px; }
.viewbar .caret { width: 14px; }
.viewbar .caret i { border-width: 2px; border-bottom-width: 0; border-top-color: #777; }
.docbar { position: absolute; top: 2px; right: 6px; height: 24px; display: flex; }
.taskpane { position: absolute; top: 56px; right: 0; width: 24px; height: 157px; display: flex; flex-direction: column; border-top: 1px solid #999; box-sizing: border-box; }
.taskpane button { flex: 1; border: 1px solid #999; border-width: 0 0 1px 1px; background: #d2d2d1; }
.taskpane .on { background: #fff; }
.splitter { position: absolute; left: 0; top: 260px; width: 8px; height: 35px; border: 1px solid #bbb; border-left: 0; background: #f9f9f6; }
.views {
  flex: none;
  box-sizing: border-box;
  height: 16px;
  display: flex;
  border-top: 1px solid #999;
  border-bottom: 1px solid #999;
  background: #f9f9f6;
}
.steps { flex: none; display: flex; width: 53px; margin-right: 2px; border-right: 1px solid #999; background: #aaacad; }
.steps button { flex: 1; font-size: 9px; line-height: 10px; color: #8a8d90; border-right: 1px solid #929496; }
.vtab { padding: 0 8px; border-right: 1px solid #999; background: #cfcfcd; white-space: nowrap; }
.vtab.on { padding: 0 9px; font-weight: 700; background: #fff; color: #222; }
.status { flex: none; box-sizing: border-box; height: 16px; display: flex; align-items: stretch; line-height: 16px; background: #f6f6f4; border-bottom: 1px solid #d6dbe8; white-space: nowrap; }
.hint { flex: 1; margin-left: -1px; }
.cell { padding: 0 4px; border-right: 1px solid #ccc; margin-right: 4px; }
.units { width: 64px; margin-left: 10px; border-left: 1px solid #ccc; text-align: right; box-sizing: border-box; padding-right: 1px; }
.up { align-self: center; margin: 0 83px 0 16px; border: 3px solid transparent; border-bottom-color: #333; border-top-width: 0; }
.shield { width: 16px; height: 15px; margin-right: 12px; }
.sizer { width: 10px; height: 10px; align-self: flex-end; }
.academy { position: absolute; right: 0; bottom: 10px; width: 142px; height: 98px; }
.academy text { font: 15px "DejaVu Serif", serif; fill: #b8485a; }
.recorder {
  flex: none;
  height: 7px;
  display: flex;
  gap: 20px;
  padding-left: 640px;
  overflow: hidden;
  background: linear-gradient(90deg, #2e2e2d 993px, #0c3f9c 993px);
  color: #a8a8a8;
  line-height: 4px;
  white-space: nowrap;
}
</style>
